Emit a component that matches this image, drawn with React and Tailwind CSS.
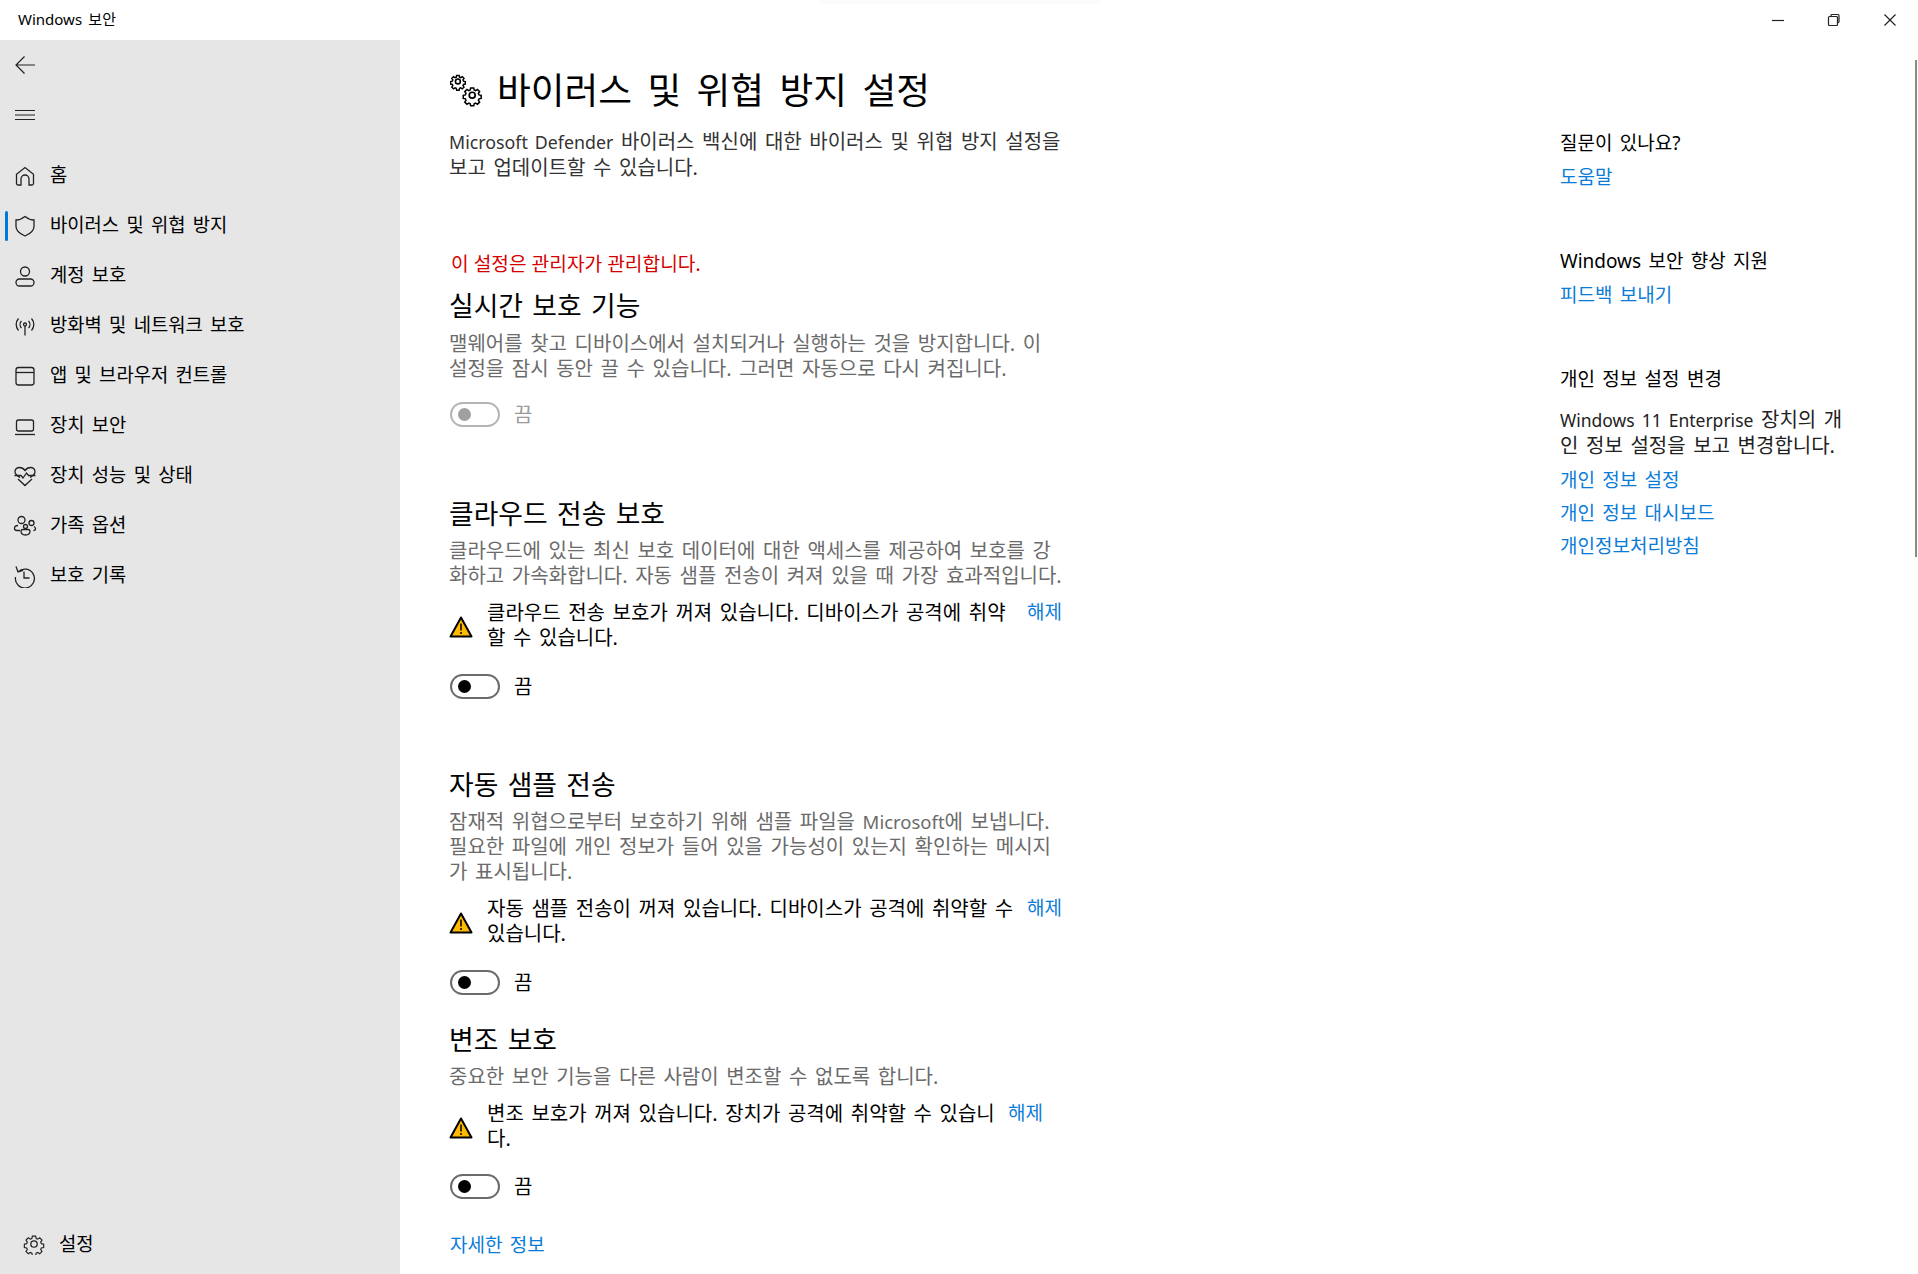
import React from 'react';

const Svg = ({ children, className = 'w-6 h-6' }) => (
  <svg viewBox="0 0 24 24" fill="none" stroke="currentColor" strokeWidth="1.3" className={className}>
    {children}
  </svg>
);

const gearPath = 'M10 2.500h4l.6 2.800 1.900.8 2.400-1.600 2.800 2.800-1.600 2.400.8 1.900 2.800.6v4l-2.800.6-.8 1.900 1.600 2.400-2.800 2.800-2.400-1.600-1.900.8-.6 2.800h-4l-.6-2.800-1.900-.8-2.400 1.600-2.800-2.800 1.600-2.400-.8-1.900-2.800-.6v-4l2.800-.6.8-1.900-1.600-2.400 2.800-2.800 2.400 1.600 1.900-.8z';

const icons = {
  home: <path d="M5.500 21H5a1.500 1.500 0 0 1-1.500-1.500v-9.300L12 3.500l8.500 6.700v9.300A1.500 1.500 0 0 1 19 21h-3v-6a4 4 0 0 0-8 0v6H5.500" />,
  shield: <path d="M12 2.500c2.500 2 5.500 3.500 9 3.500v6.500c0 4.300-3.600 7.200-9 9.500-5.400-2.300-9-5.200-9-9.500V6c3.500 0 6.500-1.500 9-3.500z" />,
  person: (
    <>
      <circle cx="12" cy="7.500" r="4.500" />
      <rect x="3" y="15" width="18" height="7" rx="3.500" />
    </>
  ),
  wifi: (
    <>
      <circle cx="12" cy="10.500" r="1.500" />
      <path d="M12 12v9.500M8.500 7a5 5 0 0 0 0 7M15.500 7a5 5 0 0 1 0 7M5.500 4.500a9 9 0 0 0 0 12M18.500 4.500a9 9 0 0 1 0 12" />
    </>
  ),
  app: (
    <>
      <rect x="3" y="3.500" width="18" height="17.500" rx="2.500" />
      <path d="M3 8.500h18" />
    </>
  ),
  laptop: (
    <>
      <rect x="3.500" y="6" width="17" height="11" rx="2" />
      <path d="M2 20.500h20" />
    </>
  ),
  heart: <path d="M7 13.500C3 11 1.800 9 2 7.500 2.300 5 4.200 3.500 6.500 3.500 8.800 3.500 10.700 4.700 12 6.500c1.300-1.800 3.200-3 5.500-3 2.300 0 4.200 1.500 4.500 4 .2 1.500-1 3.500-5 6M5 15l7 6.500 7-6.500M1.500 11.500H8l2 2.500 3.500-5 2 2.500h7" />,
  family: (
    <>
      <circle cx="8.500" cy="6" r="3.500" />
      <circle cx="12.500" cy="12.500" r="2" />
      <circle cx="18.500" cy="9" r="2.500" />
      <path d="M5 11.500c-2.200 0-3.500 1.200-3.500 3 0 1.300 1 2 2.500 2h3M21 12.500c1 .5 1.500 1.300 1.500 2.300 0 1-.8 1.700-2 1.700M8 17c0-1 1-1.500 2-1.500h5c1 0 2 .5 2 1.500 0 2.500-2 4-4.500 4S8 19.500 8 17z" />
    </>
  ),
  history: (
    <>
      <path d="M3 2.500l2 5.500 5-1.500M5 8a9.500 9.500 0 1 1-2.500 5" />
      <path d="M11 7.500V14h5.500" />
    </>
  ),
};

const navItems = [
  ['home', '홈'],
  ['shield', '바이러스 및 위협 방지', true],
  ['person', '계정 보호'],
  ['wifi', '방화벽 및 네트워크 보호'],
  ['app', '앱 및 브라우저 컨트롤'],
  ['laptop', '장치 보안'],
  ['heart', '장치 성능 및 상태'],
  ['family', '가족 옵션'],
  ['history', '보호 기록'],
];

const Gear = ({ className }) => (
  <svg viewBox="0 0 24 24" fill="none" stroke="currentColor" strokeWidth="1.4" className={className}>
    <circle cx="12" cy="12" r="3.500" />
    <path d={gearPath} transform="translate(1.200 1.200) scale(.9)" />
  </svg>
);

const TitleGears = () => (
  <svg viewBox="0 0 34 34" fill="none" stroke="#000" className="w-[34px] h-[34px] ml-[1px] mr-[13px]">
    <g transform="translate(-.5 0) scale(.7)" strokeWidth="2.300">
      <circle cx="12" cy="12" r="3.500" />
      <path d={gearPath} transform="translate(1.200 1.200) scale(.9)" />
    </g>
    <g transform="translate(12 12) scale(.85)" strokeWidth="2">
      <circle cx="12" cy="12" r="3.500" />
      <path d={gearPath} transform="translate(1.200 1.200) scale(.9)" />
    </g>
  </svg>
);

const Warning = () => (
  <svg viewBox="0 0 24 24" className="w-[24px] h-[24px] shrink-0 mt-[3px]">
    <path d="M12 2.500 L22.500 21.500 H1.500 Z" fill="#ffb900" stroke="#000" strokeWidth="2" strokeLinejoin="round" />
    <path d="M12 8.500v7M12 17v2" stroke="#000" strokeWidth="1.500" />
  </svg>
);

const Toggle = ({ disabled }) => (
  <div className={`flex items-center gap-[14px] ml-[1px] ${disabled ? 'text-[#9a9a9a]' : 'text-black'}`}>
    <div className={`w-[50px] h-[25px] rounded-full border-2 flex items-center pl-[6px] ${disabled ? 'border-[#b5b5b5]' : 'border-[#6b6b6b]'}`}>
      <div className={`w-[13px] h-[13px] rounded-full ${disabled ? 'bg-[#a0a0a0]' : 'bg-black'}`} />
    </div>
    <span>끔</span>
  </div>
);

const Alert = ({ lines }) => (
  <div className="flex items-center w-[613px] mt-[12px]">
    <Warning />
    <p className="ml-[14px] text-black flex-1">
      {lines[0]}
      <br />
      {lines[1]}
    </p>
    <a className="text-[#0a7cd8] text-[19px] self-start">해제</a>
  </div>
);

const Heading = ({ children, className = '' }) => (
  <h2 className={`text-[26.800px] leading-[36px] text-black ${className}`}>{children}</h2>
);

const Desc = ({ children }) => <p className="text-[#6b6b6b] mt-[6.500px]">{children}</p>;

const Link = ({ children }) => <a className="block text-[#0a7cd8] text-[19px]">{children}</a>;

export default function App() {
  return (
    <div className="relative w-[1918px] h-[1274px] overflow-hidden bg-white flex flex-col text-[20px] leading-[25px] text-black font-['Noto_Sans','Noto_Sans_CJK_KR',sans-serif] [word-spacing:0.12em]">
      <div className="h-10 flex items-center justify-between shrink-0">
        <span className="pl-[18px] text-[15px] pb-[1px]">Windows 보안</span>
        <div className="flex items-center text-[#222] pr-[20px] gap-[40px]">
          <svg width="16" height="16" viewBox="0 0 16 16" stroke="currentColor" fill="none" strokeWidth="1.200">
            <path d="M2 8.500h12" />
          </svg>
          <svg width="16" height="16" viewBox="0 0 16 16" stroke="currentColor" fill="none" strokeWidth="1.200">
            <rect x="2.500" y="4.500" width="9" height="9" rx="1" />
            <path d="M5 4.500V3.500a1 1 0 0 1 1-1h6a1 1 0 0 1 1 1v6a1 1 0 0 1-1 1h-.5" />
          </svg>
          <svg width="16" height="16" viewBox="0 0 16 16" stroke="currentColor" fill="none" strokeWidth="1.200">
            <path d="M2.500 2.500l11 11M13.500 2.500l-11 11" />
          </svg>
        </div>
      </div>

      <div className="flex flex-1 min-h-0">
        <aside className="w-[400px] shrink-0 bg-[#e6e6e6] flex flex-col text-[18.800px]">
          <div className="h-[50px] flex items-center pl-[15px]">
            <svg width="20" height="18" viewBox="0 0 20 18" fill="none" stroke="#222" strokeWidth="1.200">
              <path d="M20 9H1M9.500 .5 1 9l8.500 8.500" />
            </svg>
          </div>
          <div className="h-[50px] flex items-center pl-[15px] mb-[10.500px]">
            <svg width="20" height="12" viewBox="0 0 20 12" stroke="#222" strokeWidth="1.100">
              <path d="M0 1.500h20M0 6h20M0 10.500h20" />
            </svg>
          </div>
          {navItems.map(([icon, label, active]) => (
            <div key={label} className="relative h-[50px] flex items-center pl-[13px]">
              {active && <div className="absolute left-[5px] top-[10px] w-[3px] h-[30px] rounded-sm bg-[#0078d7]" />}
              <Svg className="w-[24px] h-[24px] text-[#222]">{icons[icon]}</Svg>
              <span className="ml-[13px]">{label}</span>
            </div>
          ))}
          <div className="mt-auto h-[60px] flex items-center pl-[23px]">
            <Gear className="w-[22px] h-[22px] text-[#222]" />
            <span className="ml-[14px]">설정</span>
          </div>
        </aside>

        <main className="flex-1 pl-[49px] flex">
          <div className="w-[640px] shrink-0">
            <div className="flex items-center mt-[25px] h-[50px]">
              <TitleGears />
              <h1 className="text-[36.700px] leading-[50px] [word-spacing:0.16em]">바이러스 및 위협 방지 설정</h1>
            </div>
            <p className="mt-[14px] text-[#333]">
              <span className="text-[17.800px]">Microsoft Defender</span> 바이러스 백신에 대한 바이러스 및 위협 방지 설정을
              <br />
              보고 업데이트할 수 있습니다.
            </p>

            <p className="mt-[71px] ml-[2px] text-[#d40000] text-[19.200px] [word-spacing:0]">이 설정은 관리자가 관리합니다.</p>

            <Heading className="mt-[12px]">실시간 보호 기능</Heading>
            <Desc>
              맬웨어를 찾고 디바이스에서 설치되거나 실행하는 것을 방지합니다. 이
              <br />
              설정을 잠시 동안 끌 수 있습니다. 그러면 자동으로 다시 켜집니다.
            </Desc>
            <div className="mt-[21px]">
              <Toggle disabled />
            </div>

            <Heading className="mt-[69px]">클라우드 전송 보호</Heading>
            <Desc>
              클라우드에 있는 최신 보호 데이터에 대한 액세스를 제공하여 보호를 강
              <br />
              화하고 가속화합니다. 자동 샘플 전송이 켜져 있을 때 가장 효과적입니다.
            </Desc>
            <Alert lines={['클라우드 전송 보호가 꺼져 있습니다. 디바이스가 공격에 취약', '할 수 있습니다.']} />
            <div className="mt-[23.500px]">
              <Toggle />
            </div>

            <Heading className="mt-[68px]">자동 샘플 전송</Heading>
            <Desc>
              잠재적 위협으로부터 보호하기 위해 샘플 파일을 <span className="text-[18.500px]">Microsoft</span>에 보냅니다.
              <br />
              필요한 파일에 개인 정보가 들어 있을 가능성이 있는지 확인하는 메시지
              <br />가 표시됩니다.
            </Desc>
            <Alert lines={['자동 샘플 전송이 꺼져 있습니다. 디바이스가 공격에 취약할 수', '있습니다.']} />
            <div className="mt-[23.500px]">
              <Toggle />
            </div>

            <Heading className="mt-[27px]">변조 보호</Heading>
            <Desc>중요한 보안 기능을 다른 사람이 변조할 수 없도록 합니다.</Desc>
            <div className="[&>div]:w-[594px]">
              <Alert lines={['변조 보호가 꺼져 있습니다. 장치가 공격에 취약할 수 있습니', '다.']} />
            </div>
            <div className="mt-[22.500px]">
              <Toggle />
            </div>

            <div className="mt-[34px] ml-[1px]">
              <Link>자세한 정보</Link>
            </div>
          </div>

          <div className="ml-[471px] w-[300px] pt-[91px]">
            <p className="text-[19px]">질문이 있나요?</p>
            <div className="mt-[9px]"><Link>도움말</Link></div>

            <p className="mt-[59px] text-[19px]">Windows 보안 향상 지원</p>
            <div className="mt-[9px]"><Link>피드백 보내기</Link></div>

            <p className="mt-[59px] text-[19px]">개인 정보 설정 변경</p>
            <p className="mt-[15px] text-[#222]">
              <span className="text-[17.500px]">Windows 11 Enterprise</span> 장치의 개
              <br />
              인 정보 설정을 보고 변경합니다.
            </p>
            <div className="mt-[10px] flex flex-col gap-[8px]">
              <Link>개인 정보 설정</Link>
              <Link>개인 정보 대시보드</Link>
              <Link>개인정보처리방침</Link>
            </div>
          </div>
        </main>
      </div>

      <div className="absolute left-[820px] top-0 w-[280px] h-[3px] bg-[#f8f8f8] blur-[1px]" />
      <div className="absolute left-[1915px] top-[60px] w-[2px] h-[497px] bg-[#8a8a8a]" />
    </div>
  );
}
